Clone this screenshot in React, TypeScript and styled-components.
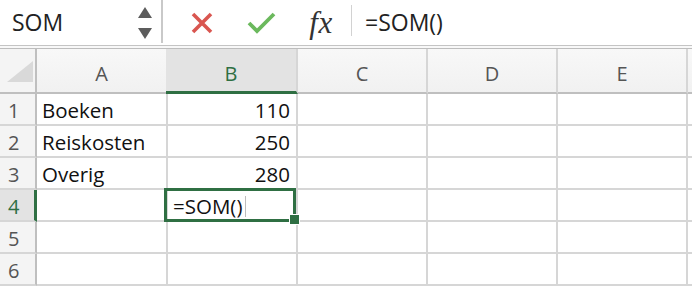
import React from 'react';
import styled, { createGlobalStyle } from 'styled-components';

const GlobalStyle = createGlobalStyle`
  html, body {
    margin: 0;
    padding: 0;
    background: #ffffff;
    overflow: hidden;
  }
  * {
    box-sizing: border-box;
  }
`;

const green = '#2f6f43';
const gridLine = '#d6d6d6';
const headerLine = '#bfbfbf';

const Page = styled.div`
  width: 692px;
  height: 286px;
  overflow: hidden;
  font-family: 'Open Sans', 'Liberation Sans', sans-serif;
  color: #111;
`;

const Toolbar = styled.div`
  display: flex;
  align-items: stretch;
  height: 46px;
  border-bottom: 1px solid #c4c4c4;
  background: #ffffff;
`;

const NameBox = styled.div`
  display: flex;
  align-items: center;
  justify-content: space-between;
  width: 163px;
  height: 43px;
  padding: 0 9px 0 12px;
  border-right: 2px solid #c9c9c9;
  font-size: 23px;
  color: #222;
`;

const Spinner = styled.div`
  display: flex;
  flex-direction: column;
  align-items: center;
  gap: 10px;
  margin-top: 2px;
`;

const Triangle = styled.span<{ $down?: boolean }>`
  width: 0;
  height: 0;
  border-left: 7px solid transparent;
  border-right: 7px solid transparent;
  ${(p) =>
    p.$down
      ? 'border-top: 11px solid #5c5c5c;'
      : 'border-bottom: 11px solid #5c5c5c;'}
`;

const Actions = styled.div`
  display: flex;
  align-items: center;
  padding-left: 27px;
`;

const ActionIcon = styled.span<{ $w: number; $gap?: number }>`
  display: flex;
  align-items: center;
  justify-content: center;
  width: ${(p) => p.$w}px;
  margin-left: ${(p) => p.$gap ?? 0}px;
`;

const Fx = styled.span`
  font-family: 'Liberation Serif', 'DejaVu Serif', serif;
  font-style: italic;
  font-size: 31px;
  color: #333;
  margin-top: 0;
  letter-spacing: 0.5px;
`;

const Divider = styled.span`
  align-self: flex-start;
  width: 1px;
  height: 31px;
  margin: 5px 13px 0 14px;
  background: #d2d2d2;
`;

const FormulaText = styled.div`
  display: flex;
  align-items: center;
  height: 43px;
  font-size: 23px;
  color: #222;
`;

const Strip = styled.div`
  height: 3px;
  background: #f8f8f8;
  border-bottom: 1px solid #bdbdbd;
`;

const Grid = styled.div`
  display: grid;
  grid-template-columns: 37px 131px 130px 130px 130px 130px 1fr;
  grid-template-rows: 45px repeat(6, 32px);
`;

const Corner = styled.div`
  position: relative;
  background: #f4f4f4;
  border-right: 2px solid ${headerLine};
  border-bottom: 2px solid ${headerLine};
  overflow: hidden;

  &::after {
    content: '';
    position: absolute;
    right: 2px;
    bottom: 10px;
    width: 0;
    height: 0;
    border-left: 26px solid transparent;
    border-bottom: 21px solid #d9d9d9;
  }
`;

const ColHeader = styled.div<{ $active?: boolean }>`
  display: flex;
  align-items: center;
  justify-content: center;
  padding-top: 6px;
  font-size: 20px;
  color: ${(p) => (p.$active ? green : '#555')};
  background: ${(p) =>
    p.$active ? '#e3e3e3' : 'linear-gradient(#f8f8f8, #f1f1f1)'};
  border-right: 2px solid ${gridLine};
  border-bottom: ${(p) => (p.$active ? `3px solid ${green}` : `2px solid ${headerLine}`)};
  ${(p) => (p.$active ? 'margin-left: -2px;' : '')}
`;

const RowHeader = styled.div<{ $active?: boolean }>`
  display: flex;
  align-items: center;
  padding-left: 8px;
  padding-top: 2px;
  font-size: 20px;
  color: ${(p) => (p.$active ? green : '#555')};
  background: ${(p) => (p.$active ? '#e3e3e3' : '#f4f4f4')};
  border-right: ${(p) => (p.$active ? `3px solid ${green}` : `2px solid ${headerLine}`)};
  border-bottom: 2px solid ${gridLine};
`;

const Cell = styled.div<{ $align?: 'left' | 'right'; $selected?: boolean }>`
  position: relative;
  display: flex;
  align-items: center;
  justify-content: ${(p) => (p.$align === 'right' ? 'flex-end' : 'flex-start')};
  padding: 2px ${(p) => (p.$align === 'right' ? '6px' : '4px')} 0 5px;
  font-size: 20.5px;
  color: #111;
  background: #ffffff;
  border-right: 2px solid ${gridLine};
  border-bottom: 2px solid ${gridLine};
  white-space: nowrap;

  ${(p) =>
    p.$selected &&
    `
    z-index: 2;
    &::after {
      content: '';
      position: absolute;
      top: -2px;
      left: -4px;
      right: 0;
      bottom: -2px;
      border: 3px solid ${green};
      pointer-events: none;
    }
    &::before {
      content: '';
      position: absolute;
      right: -4px;
      bottom: -5px;
      width: 9px;
      height: 9px;
      background: ${green};
      border: 1px solid #ffffff;
      z-index: 3;
    }
  `}
`;

const Caret = styled.span`
  display: inline-block;
  width: 1px;
  height: 21px;
  margin-left: 3px;
  background: #bdbdbd;
`;

type Row = { label: string; value: string };

const rows: Row[] = [
  { label: 'Boeken', value: '110' },
  { label: 'Reiskosten', value: '250' },
  { label: 'Overig', value: '280' },
  { label: '', value: '' },
  { label: '', value: '' },
  { label: '', value: '' },
];

const columns = ['A', 'B', 'C', 'D', 'E'];

const CancelIcon = () => (
  <svg width="24" height="24" viewBox="0 0 24 24">
    <path d="M3 3 L21 21 M21 3 L3 21" stroke="#d95650" strokeWidth="3.6" fill="none" />
  </svg>
);

const ConfirmIcon = () => (
  <svg width="30" height="24" viewBox="0 0 30 24">
    <path d="M2 12 L10 20 L27 3" stroke="#6bb95d" strokeWidth="3.8" fill="none" />
  </svg>
);

export default function App() {
  return (
    <Page>
      <GlobalStyle />
      <Toolbar>
        <NameBox>
          <span>SOM</span>
          <Spinner>
            <Triangle />
            <Triangle $down />
          </Spinner>
        </NameBox>
        <Actions>
          <ActionIcon $w={24}>
            <CancelIcon />
          </ActionIcon>
          <ActionIcon $w={30} $gap={33}>
            <ConfirmIcon />
          </ActionIcon>
          <ActionIcon $w={32} $gap={28}>
            <Fx>fx</Fx>
          </ActionIcon>
        </Actions>
        <Divider />
        <FormulaText>=SOM()</FormulaText>
      </Toolbar>
      <Strip />
      <Grid>
        <Corner />
        {columns.map((c) => (
          <ColHeader key={c} $active={c === 'B'}>
            {c}
          </ColHeader>
        ))}
        <ColHeader />
        {rows.map((r, i) => (
          <React.Fragment key={i}>
            <RowHeader $active={i === 3}>{i + 1}</RowHeader>
            <Cell>{r.label}</Cell>
            {i === 3 ? (
              <Cell $selected>
                =SOM()
                <Caret />
              </Cell>
            ) : (
              <Cell $align="right">{r.value}</Cell>
            )}
            <Cell />
            <Cell />
            <Cell />
            <Cell />
          </React.Fragment>
        ))}
      </Grid>
    </Page>
  );
}
